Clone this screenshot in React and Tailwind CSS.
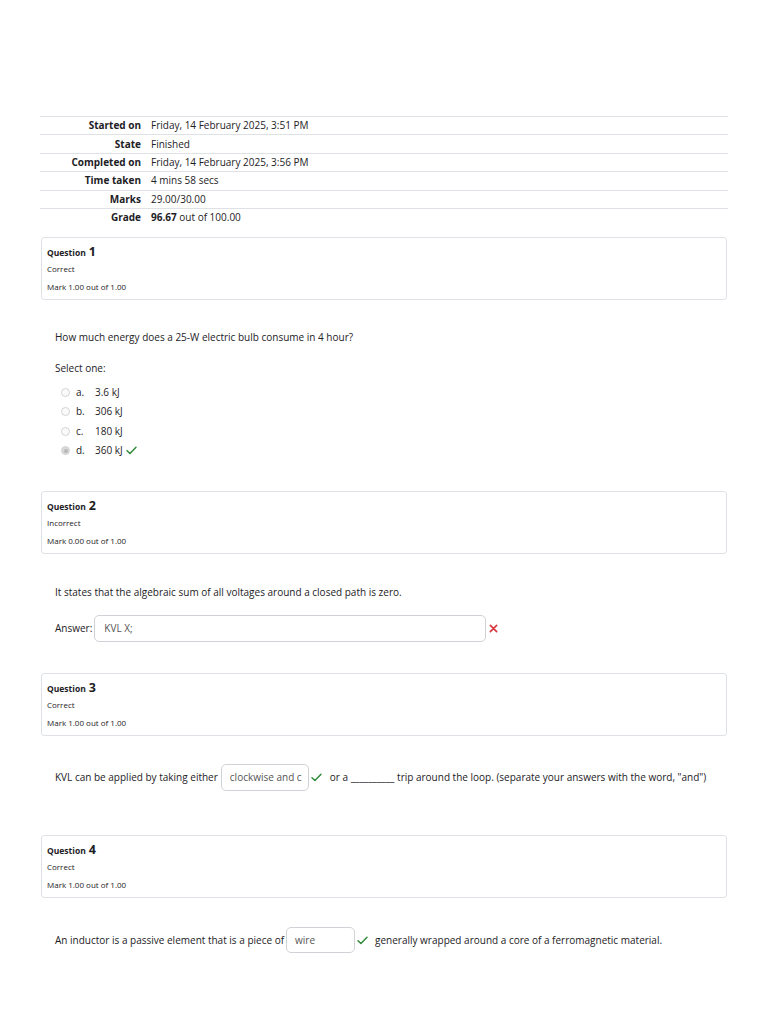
import React from "react";

const Check = ({ className = "" }) => (
  <svg viewBox="0 0 12 10" className={className} width="11" height="9" fill="none" stroke="#2f8a3b" strokeWidth="1.6" strokeLinecap="round" strokeLinejoin="round">
    <path d="M1 5.2 L4.3 8.4 L11 1.3" />
  </svg>
);

const Cross = () => (
  <svg viewBox="0 0 10 10" width="9" height="9" fill="none" stroke="#d9363e" strokeWidth="1.8" strokeLinecap="round">
    <path d="M1.5 1.5 L8.5 8.5 M8.5 1.5 L1.5 8.5" />
  </svg>
);

const rows = [
  ["Started on", "Friday, 14 February 2025, 3:51 PM"],
  ["State", "Finished"],
  ["Completed on", "Friday, 14 February 2025, 3:56 PM"],
  ["Time taken", "4 mins 58 secs"],
  ["Marks", "29.00/30.00"],
  ["Grade", null],
];

const QBox = ({ n, status, mark }) => (
  <div className="mx-[41px] w-[686px] h-[63px] border border-[#dee2e6] rounded-[3px] px-[5px] pt-[8px]">
    <div className="flex items-baseline h-[14px] text-[#1d2125]">
      <span className="text-[8.5px] font-bold">Question</span>
      <span className="text-[12.5px] font-bold ml-[3px] leading-none">{n}</span>
    </div>
    <div className="text-[8px] text-[#1d2125] mt-[3px] h-[12px]">{status}</div>
    <div className="text-[8px] text-[#1d2125] mt-[6px]">{mark}</div>
  </div>
);

const Radio = ({ checked }) => (
  <span className={`inline-block w-[9px] h-[9px] rounded-full border border-[#d4d4d4] ${checked ? "bg-[#d8d8d8]" : "bg-[#fafafa]"} relative`}>
    {checked && <span className="absolute left-[1.5px] top-[1.5px] w-[4px] h-[4px] rounded-full bg-[#b8b8b8]" />}
  </span>
);

export default function App() {
  return (
    <div className="w-[768px] h-[1024px] bg-white text-[#1d2125]" style={{ fontFamily: '"Open Sans", "Noto Sans", sans-serif' }}>
      <div className="h-[116px]" />
      <div className="mx-[40px] w-[688px]">
        {rows.map(([k, v], i) => (
          <div key={k} className="flex h-[18.4px] items-center border-t border-[#dee2e6] text-[10px]">
            <div className="w-[101px] text-right font-bold pr-[0px]">{k}</div>
            <div className="ml-[10px]">
              {v === null ? (
                <span><b>96.67</b> out of 100.00</span>
              ) : v}
            </div>
          </div>
        ))}
      </div>
      <div className="h-[11px]" />
      <QBox n="1" status="Correct" mark="Mark 1.00 out of 1.00" />
      <div className="ml-[55px] mt-[30px] text-[10px] leading-[14px]">How much energy does a 25-W electric bulb consume in 4 hour?</div>
      <div className="ml-[55px] mt-[17px] text-[10px] leading-[14px]">Select one:</div>
      <div className="ml-[61px] mt-[7px] flex flex-col">
        {[["a.", "3.6 kJ"], ["b.", "306 kJ"], ["c.", "180 kJ"], ["d.", "360 kJ"]].map(([l, v], i) => (
          <div key={l} className="flex items-center h-[19.5px] text-[10px]">
            <Radio checked={i === 3} />
            <span className="ml-[6px] w-[19px]">{l}</span>
            <span>{v}</span>
            {i === 3 && <Check className="ml-[3px]" />}
          </div>
        ))}
      </div>
      <div className="h-[31px]" />
      <QBox n="2" status="Incorrect" mark="Mark 0.00 out of 1.00" />
      <div className="ml-[55px] mt-[31px] text-[10px] leading-[14px]">It states that the algebraic sum of all voltages around a closed path is zero.</div>
      <div className="ml-[55px] mt-[16px] flex items-center text-[10px]">
        <span>Answer:</span>
        <div className="ml-[2px] w-[392px] h-[27px] border border-[#cfd3d7] rounded-[5px] flex items-center px-[9px] text-[#555]">KVL X;</div>
        <span className="ml-[3px]"><Cross /></span>
      </div>
      <div className="h-[31px]" />
      <QBox n="3" status="Correct" mark="Mark 1.00 out of 1.00" />
      <div className="ml-[55px] mt-[28px] flex items-center text-[10px]">
        <span>KVL can be applied by taking either</span>
        <div className="ml-[3px] w-[88px] h-[27px] border border-[#cfd3d7] rounded-[5px] flex items-center px-[8px] text-[#555] overflow-hidden whitespace-nowrap">clockwise and c</div>
        <Check className="ml-[2px]" />
        <span className="ml-[8px]">or a __________ trip around the loop. (separate your answers with the word, "and")</span>
      </div>
      <div className="h-[44px]" />
      <QBox n="4" status="Correct" mark="Mark 1.00 out of 1.00" />
      <div className="ml-[55px] mt-[29px] flex items-center text-[10px]">
        <span>An inductor is a passive element that is a piece of</span>
        <div className="ml-[2px] w-[69px] h-[26px] border border-[#cfd3d7] rounded-[5px] flex items-center px-[8px] text-[#555]">wire</div>
        <Check className="ml-[2px]" />
        <span className="ml-[7px]">generally wrapped around a core of a ferromagnetic material.</span>
      </div>
    </div>
  );
}
